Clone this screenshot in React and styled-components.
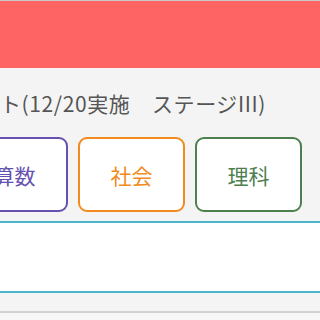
import React from "react";
import styled, { createGlobalStyle } from "styled-components";

const Global = createGlobalStyle`
  html, body { margin: 0; padding: 0; background: #f4f4f4; overflow: hidden; }
  body { font-family: "Noto Sans CJK JP", "Noto Sans", sans-serif; }
`;

const Page = styled.div`
  width: 320px;
  height: 320px;
  display: flex;
  flex-direction: column;
  background: #f4f4f4;
  overflow: hidden;
`;

const Header = styled.div`
  height: 67px;
  border-top: 1px solid #c9c9c9;
  background: #ff6464;
  flex-shrink: 0;
`;

const Title = styled.div`
  margin-top: 22px;
  height: 26px;
  line-height: 26px;
  font-size: 21px;
  letter-spacing: 0.6px;
  color: #555;
  white-space: nowrap;
`;

const ButtonRow = styled.div`
  margin-top: 21px;
  margin-left: -39px;
  display: flex;
  gap: 10px;
`;

const SubjectButton = styled.div`
  width: 107px;
  height: 75px;
  box-sizing: border-box;
  border: 2px solid ${(p) => p.$color};
  border-radius: 9px;
  background: #fff;
  color: ${(p) => p.$color};
  font-size: 21px;
  display: flex;
  align-items: center;
  justify-content: center;
  flex-shrink: 0;
`;

const InputBox = styled.div`
  margin-top: 9px;
  height: 68px;
  border-top: 2px solid #4bb5cc;
  border-bottom: 2px solid #4bb5cc;
  background: #fff;
  flex-shrink: 0;
`;

const Footer = styled.div`
  margin-top: 18px;
  border-top: 2px solid #d2d2d2;
  flex: 1;
  background: #f7f7f7;
`;

export default function App() {
  return (
    <>
      <Global />
      <Page>
        <Header />
        <Title>ト(12/20実施　ステージIII)</Title>
        <ButtonRow>
          <SubjectButton $color="#6651b0">算数</SubjectButton>
          <SubjectButton $color="#f28a1d">社会</SubjectButton>
          <SubjectButton $color="#4e7f4f">理科</SubjectButton>
        </ButtonRow>
        <InputBox />
        <Footer />
      </Page>
    </>
  );
}
